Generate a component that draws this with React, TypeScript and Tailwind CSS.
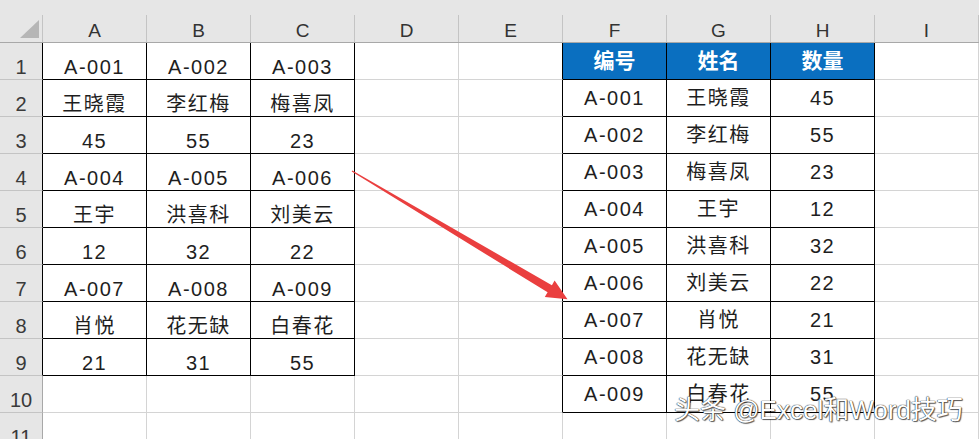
import React from "react";

const COLS = ["A", "B", "C", "D", "E", "F", "G", "H", "I"];

const left = [
  ["A-001", "A-002", "A-003"],
  ["王晓霞", "李红梅", "梅喜凤"],
  ["45", "55", "23"],
  ["A-004", "A-005", "A-006"],
  ["王宇", "洪喜科", "刘美云"],
  ["12", "32", "22"],
  ["A-007", "A-008", "A-009"],
  ["肖悦", "花无缺", "白春花"],
  ["21", "31", "55"],
];

const right = [
  ["编号", "姓名", "数量"],
  ["A-001", "王晓霞", "45"],
  ["A-002", "李红梅", "55"],
  ["A-003", "梅喜凤", "23"],
  ["A-004", "王宇", "12"],
  ["A-005", "洪喜科", "32"],
  ["A-006", "刘美云", "22"],
  ["A-007", "肖悦", "21"],
  ["A-008", "花无缺", "31"],
  ["A-009", "白春花", "55"],
];

// row is 1-based, col is 0-based (A = 0)
function inTable(r: number, c: number) {
  if (r >= 1 && r <= 9 && c >= 0 && c <= 2) return true;
  if (r >= 1 && r <= 10 && c >= 5 && c <= 7) return true;
  return false;
}

function textAt(r: number, c: number) {
  if (r >= 1 && r <= 9 && c >= 0 && c <= 2) return left[r - 1][c];
  if (r >= 1 && r <= 10 && c >= 5 && c <= 7) return right[r - 1][c - 5];
  return "";
}

function Cell({ r, c }: { r: number; c: number }) {
  const isHead = r === 1 && c >= 5 && c <= 7;
  const centered = c >= 5;
  const rightBlack = inTable(r, c) || inTable(r, c + 1);
  const bottomBlack = inTable(r, c) || inTable(r + 1, c);
  return (
    <div
      className={
        "flex justify-center border-r border-b " +
        (centered ? "items-center " : "items-end ") +
        (rightBlack ? "border-r-black " : "border-r-[#d4d4d4] ") +
        (bottomBlack ? "border-b-black " : "border-b-[#d4d4d4] ") +
        (isHead
          ? "bg-[#0a6fc0] text-white font-bold text-[21px] leading-[26px]"
          : "bg-white text-[#1e1e1e] text-[20px] leading-[24px] tracking-[1.5px]")
      }
    >
      {textAt(r, c)}
    </div>
  );
}

function Arrow() {
  return (
    <svg className="absolute left-0 top-0 pointer-events-none" width="979" height="439">
      <polygon
        points="352.3,170.5 551.9,285.3 554.6,280.6 567.5,299.2 544.8,296.9 547.6,292.3 351.7,171.5"
        fill="#ea3f3f"
      />
    </svg>
  );
}

export default function App() {
  const rows = Array.from({ length: 11 }, (_, i) => i + 1);
  return (
    <div
      className="relative w-[979px] h-[439px] overflow-hidden bg-white"
      style={{ fontFamily: '"Liberation Sans", "Noto Sans CJK SC", sans-serif' }}
    >
      <div className="grid grid-cols-[43px_repeat(9,104px)] grid-rows-[43px_repeat(11,37px)]">
        {/* corner */}
        <div className="relative bg-[#e6e6e6] border-b border-[#a8a8a8]">
          <div className="absolute left-0 right-0 bottom-0 top-[15px] border-r border-[#c4c4c4]" />
          <svg className="absolute left-0 top-0" width="43" height="43">
            <polygon points="20,38 39,38 39,20" fill="#b6b6b6" />
          </svg>
        </div>
        {COLS.map((l) => (
          <div key={l} className="bg-[#e6e6e6] border-b border-[#a8a8a8] pt-[15px]">
            <div className="h-full border-r border-[#c4c4c4] flex items-center justify-center pt-[3px] text-[19px] text-[#333] leading-none">
              {l}
            </div>
          </div>
        ))}
        {rows.map((r) => (
          <React.Fragment key={r}>
            <div
              className={
                "flex items-end justify-center bg-[#e6e6e6] border-b border-b-[#c4c4c4] border-r text-[20px] leading-[24px] text-[#3a3a3a] " +
                (inTable(r, 0) ? "border-r-black" : "border-r-[#a8a8a8]")
              }
            >
              {r}
            </div>
            {COLS.map((_, c) => (
              <Cell key={c} r={r} c={c} />
            ))}
          </React.Fragment>
        ))}
      </div>
      <Arrow />
      <div className="absolute left-[674px] top-[393px] text-[26px] leading-[34px] text-white whitespace-nowrap [text-shadow:0_0_1px_#222,0_0_1px_#222,1px_1px_1px_rgba(0,0,0,0.6)]">
        头条 @Excel和Word技巧
      </div>
    </div>
  );
}
